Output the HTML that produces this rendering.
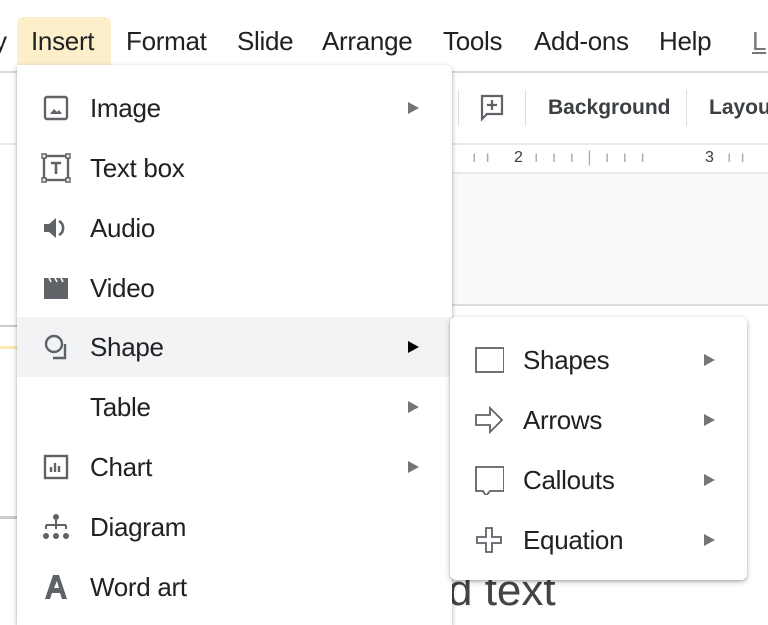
<!DOCTYPE html>
<html><head><style>
body{margin:0;width:768px;height:606px;overflow:hidden;background:#fff;font-family:"Liberation Sans",Arial,sans-serif;position:relative;color:#202124}
.a{position:absolute}
.mb{top:26px;font-size:26px;color:#202124;letter-spacing:-0.3px}
.menu{position:absolute;background:#fff;border-radius:6px;box-shadow:0 2px 6px rgba(0,0,0,.25),0 1px 2px rgba(0,0,0,.15)}
.it{position:absolute;left:0;right:0;height:60px;font-size:26px;line-height:60px;letter-spacing:-0.3px}
.it span{position:absolute;left:73px}
.ar{position:absolute;width:0;height:0;border-top:6px solid transparent;border-bottom:6px solid transparent;border-left:11px solid #757575;top:24px}
.ic{position:absolute;top:15px;left:24px;width:30px;height:30px}
</style></head><body>
<div class="a" style="left:0;top:-26px;font-size:28px;color:#444">entation</div>
<div class="a" style="left:17px;top:17px;width:94px;height:48px;background:#fcefc9;border-radius:6px 6px 0 0"></div>
<div class="a mb" style="left:-6px">y</div>
<div class="a mb" style="left:31px">Insert</div>
<div class="a mb" style="left:126px">Format</div>
<div class="a mb" style="left:237px">Slide</div>
<div class="a mb" style="left:322px">Arrange</div>
<div class="a mb" style="left:443px">Tools</div>
<div class="a mb" style="left:534px">Add-ons</div>
<div class="a mb" style="left:659px">Help</div>
<div class="a mb" style="left:752px;text-decoration:underline;color:#777">L</div>
<div class="a" style="left:0;top:71px;width:768px;height:2px;background:#dadce0"></div>
<div class="a" style="left:458px;top:90px;width:1px;height:36px;background:#dadce0"></div>
<div class="a" style="left:525px;top:90px;width:1px;height:36px;background:#dadce0"></div>
<div class="a" style="left:686px;top:90px;width:1px;height:36px;background:#dadce0"></div>
<svg class="a" style="left:478px;top:93px" width="30" height="30" viewBox="0 0 30 30"><path d="M4 3h20v18H9l-5 5z" fill="none" stroke="#5f6368" stroke-width="2.2"/><path d="M14 7v10M9 12h10" stroke="#5f6368" stroke-width="2.2"/></svg>
<div class="a" style="left:548px;top:96px;font-size:21px;color:#3c4043;font-weight:bold">Background</div>
<div class="a" style="left:709px;top:96px;font-size:21px;color:#3c4043;font-weight:bold">Layou</div>
<div class="a" style="left:0;top:143px;width:768px;height:2px;background:#e8eaed"></div>
<div class="a" style="left:452px;top:145px;width:316px;height:27px;font-size:16px;color:#3c4043">
<span class="a" style="left:20px;top:4px;color:#aaa">ı &nbsp;ı</span><span class="a" style="left:62px;top:4px">2</span><span class="a" style="left:82px;top:4px;color:#aaa">ı &nbsp; ı &nbsp; ı &nbsp; | &nbsp; ı &nbsp; ı &nbsp; ı</span><span class="a" style="left:253px;top:4px">3</span><span class="a" style="left:275px;top:4px;color:#aaa">ı &nbsp;ı</span></div>
<div class="a" style="left:452px;top:172px;width:316px;height:130px;background:#f8f9fa;border-top:2px solid #e8eaed;border-bottom:2px solid #dadce0"></div>
<div class="a" style="left:0;top:346px;width:17px;height:3px;background:#fbe9b7"></div>
<div class="a" style="left:0;top:516px;width:17px;height:3px;background:#ccc"></div>
<div class="a" style="left:0;top:325px;width:17px;height:2px;background:#ccc"></div>
<div class="a" style="left:448px;top:566px;font-size:44px;color:#444">d text</div>

<div class="menu" style="left:17px;top:65px;width:435px;height:560px;border-radius:0 6px 0 0">
<div class="it" style="top:13px"><svg class="ic" viewBox="0 0 30 30"><rect x="4" y="4" width="22" height="22" rx="2" fill="none" stroke="#5f6368" stroke-width="2.4"/><path d="M9 21l4-5 3 3 2-2 3 4z" fill="#5f6368"/></svg><span>Image</span><div class="ar" style="left:391px"></div></div>
<div class="it" style="top:73px"><svg class="ic" viewBox="0 0 30 30"><rect x="3" y="3" width="24" height="24" fill="none" stroke="#5f6368" stroke-width="2.4"/><rect x="1" y="1" width="4" height="4" fill="#fff" stroke="#5f6368" stroke-width="1.5"/><rect x="25" y="1" width="4" height="4" fill="#fff" stroke="#5f6368" stroke-width="1.5"/><rect x="1" y="25" width="4" height="4" fill="#fff" stroke="#5f6368" stroke-width="1.5"/><rect x="25" y="25" width="4" height="4" fill="#fff" stroke="#5f6368" stroke-width="1.5"/><path d="M10 10h10M15 10v11" stroke="#5f6368" stroke-width="2.6"/></svg><span>Text box</span></div>
<div class="it" style="top:133px"><svg class="ic" viewBox="0 0 30 30"><path d="M3 11h5l7-6v20l-7-6H3z" fill="#5f6368"/><path d="M18 8a8 8 0 010 14" fill="none" stroke="#5f6368" stroke-width="2.6"/></svg><span>Audio</span></div>
<div class="it" style="top:193px"><svg class="ic" viewBox="0 0 30 30"><path d="M3 5h24v21H3z" fill="#5f6368"/><path d="M8 5l2 4M14 5l2 4M20 5l2 4" stroke="#fff" stroke-width="1.5"/></svg><span>Video</span></div>
<div class="it" style="top:252px;background:#f1f3f4"><svg class="ic" viewBox="0 0 30 30"><circle cx="13" cy="12" r="8" fill="none" stroke="#5f6368" stroke-width="2.4"/><path d="M24 12v14H12" fill="none" stroke="#5f6368" stroke-width="2.4"/></svg><span>Shape</span><div class="ar" style="left:391px;border-left-color:#000"></div></div>
<div class="it" style="top:312px"><span>Table</span><div class="ar" style="left:391px"></div></div>
<div class="it" style="top:372px"><svg class="ic" viewBox="0 0 30 30"><rect x="4" y="4" width="22" height="22" fill="none" stroke="#5f6368" stroke-width="2.4"/><path d="M10 20v-5M14 20v-9M18 20v-6" stroke="#5f6368" stroke-width="2.4"/></svg><span>Chart</span><div class="ar" style="left:391px"></div></div>
<div class="it" style="top:432px"><svg class="ic" viewBox="0 0 30 30"><circle cx="15" cy="5" r="3" fill="#5f6368"/><path d="M15 8v5M5 13h20M5 13v4M15 13v4M25 13v4" stroke="#5f6368" stroke-width="2"/><circle cx="5" cy="24" r="3" fill="#5f6368"/><circle cx="15" cy="24" r="3" fill="#5f6368"/><circle cx="25" cy="24" r="3" fill="#5f6368"/></svg><span>Diagram</span></div>
<div class="it" style="top:492px"><svg class="ic" viewBox="0 0 30 30"><path d="M4 27L12 3h6l8 24h-5l-2-6h-8l-2 6z" fill="#5f6368"/><path d="M13 16h5l-2-7z" fill="#fff"/></svg><span>Word art</span></div>
</div>

<div class="menu" style="left:450px;top:317px;width:297px;height:263px">
<div class="it" style="top:13px"><svg class="ic" viewBox="0 0 30 30"><rect x="2" y="3" width="28" height="24" fill="none" stroke="#5f6368" stroke-width="1.8"/></svg><span>Shapes</span><div class="ar" style="left:254px"></div></div>
<div class="it" style="top:73px"><svg class="ic" viewBox="0 0 30 30"><path d="M2 10h14V3l12 12-12 12v-7H2z" fill="none" stroke="#5f6368" stroke-width="1.8"/></svg><span>Arrows</span><div class="ar" style="left:254px"></div></div>
<div class="it" style="top:133px"><svg class="ic" viewBox="0 0 30 30"><path d="M2 2h28v24H16l-4 5-3-5H2z" fill="none" stroke="#5f6368" stroke-width="1.8"/></svg><span>Callouts</span><div class="ar" style="left:254px"></div></div>
<div class="it" style="top:193px"><svg class="ic" viewBox="0 0 30 30"><path d="M12 3h6v9h9v6h-9v9h-6v-9H3v-6h9z" fill="none" stroke="#5f6368" stroke-width="1.8"/></svg><span>Equation</span><div class="ar" style="left:254px"></div></div>
</div>
</body></html>
